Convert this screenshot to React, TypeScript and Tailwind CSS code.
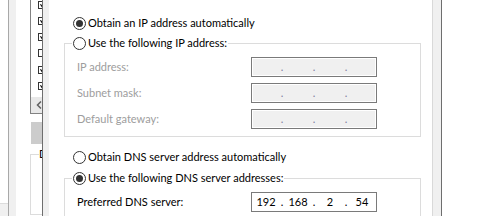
import { Fragment } from 'react';

function Radio({ checked }: { checked?: boolean }) {
  return (
    <span className="flex h-[13px] w-[13px] shrink-0 items-center justify-center rounded-full border border-[#333333] bg-white">
      {checked && <span className="h-[7px] w-[7px] rounded-full bg-[#333333]" />}
    </span>
  );
}

function RadioRow({ label, checked }: { label: string; checked?: boolean }) {
  return (
    <div className="flex h-[14px] items-center gap-[2px]">
      <Radio checked={checked} />
      <span className="whitespace-nowrap text-black">{label}</span>
    </div>
  );
}

function IpBox({ parts, disabled }: { parts: string[]; disabled?: boolean }) {
  return (
    <div
      className={
        disabled
          ? 'flex h-[20px] w-[126px] items-center border border-[#7a7a7a] bg-[#f0f0f0] shadow-[inset_0_0_0_1px_#ffffff]'
          : 'flex h-[20px] w-[126px] items-center border border-[#7a7a7a] bg-white'
      }
    >
      {parts.map((p, i) => (
        <Fragment key={i}>
          {i > 0 && (
            <span className={disabled ? 'flex w-[4px] justify-center text-[#7f7f9f]' : 'flex w-[4px] justify-center text-black'}>
              .
            </span>
          )}
          <span className="flex-1 text-center text-black">{p}</span>
        </Fragment>
      ))}
    </div>
  );
}

function FieldRow({ label, parts, disabled }: { label: string; parts: string[]; disabled?: boolean }) {
  return (
    <div className="flex h-[20px] items-center pl-[12px]">
      <span className={disabled ? 'w-[174px] text-[#9d9d9d]' : 'w-[174px] text-black'}>{label}</span>
      <IpBox parts={parts} disabled={disabled} />
    </div>
  );
}

function CheckRow({ checked }: { checked?: boolean }) {
  return (
    <div className="h-[17px] pl-[7px] pt-[1px]">
      <div className="relative h-[8px] w-[8px] border border-[#333333] bg-white">
        {checked && (
          <svg viewBox="0 0 8 8" className="absolute left-0 top-0 h-[6px] w-[6px]">
            <path d="M2 3 L4 6 L7 0" fill="none" stroke="#000" strokeWidth="1.6" />
          </svg>
        )}
      </div>
    </div>
  );
}

export default function App() {
  const blank = ['', '', '', ''];
  return (
    <div className="flex h-[216px] w-[478px] overflow-hidden bg-white font-['Segoe_UI','Lato',sans-serif] text-[11px] leading-[14px]">
      {/* window behind */}
      <div className="flex w-[8px] flex-col justify-end">
        <div className="h-[13px] border-t border-[#dcdcdc] bg-[#f0f0f0]" />
      </div>
      <div className="w-[1px] bg-[#a8a8a8]" />
      <div className="w-[7px] bg-[#f0f0f0]" />
      <div className="w-[14px] bg-white" />
      <div className="flex w-[12px] flex-col overflow-hidden">
        <div className="flex h-[114px] shrink-0 flex-col justify-end overflow-hidden border-b border-l border-[#828282]">
          <CheckRow checked />
          <CheckRow checked />
          <CheckRow checked />
          <CheckRow />
          <CheckRow checked />
          <CheckRow checked />
          <div className="flex h-[16px] shrink-0 items-center bg-[#e8e8e8] pl-[5px]">
            <svg viewBox="0 0 6 8" className="h-[8px] w-[6px]">
              <path d="M5 0.5 L1.5 4 L5 7.5" fill="none" stroke="#606060" strokeWidth="1.5" />
            </svg>
          </div>
        </div>
        <div className="ml-[1px] mt-[8px] h-[22px] shrink-0 bg-[#cccccc]" />
        <fieldset className="mt-[3px] h-[68px] w-[200px] shrink-0 border border-[#dcdcdc]">
          <legend className="ml-[8px] w-[6px] overflow-hidden whitespace-nowrap text-black">Description</legend>
        </fieldset>
      </div>
      <div className="w-[1px] bg-[#6e6e6e]" />
      <div className="w-[6px] bg-[#f0f0f0]" />

      {/* tab page */}
      <div className="flex w-[384px] shrink-0 flex-col border-r border-[#d9d9d9] bg-white pt-[16px]">
        <div className="pl-[24px]">
          <RadioRow label="Obtain an IP address automatically" checked />
        </div>
        <fieldset className="ml-[15px] mr-[11px] mt-[6px] border border-[#dcdcdc] pb-[7px]">
          <legend className="ml-[7px] px-[1px]">
            <RadioRow label="Use the following IP address:" />
          </legend>
          <div className="mt-[7px] flex flex-col gap-[6px]">
            <FieldRow label="IP address:" parts={blank} disabled />
            <FieldRow label="Subnet mask:" parts={blank} disabled />
            <FieldRow label="Default gateway:" parts={blank} disabled />
          </div>
        </fieldset>
        <div className="mt-[13px] pl-[24px]">
          <RadioRow label="Obtain DNS server address automatically" />
        </div>
        <fieldset className="ml-[15px] mr-[11px] mt-[7px] border border-[#dcdcdc] pb-[40px]">
          <legend className="ml-[7px] px-[1px]">
            <RadioRow label="Use the following DNS server addresses:" checked />
          </legend>
          <div className="mt-[7px] flex flex-col gap-[6px]">
            <FieldRow label="Preferred DNS server:" parts={['192', '168', '2', '54']} />
          </div>
        </fieldset>
      </div>
      <div className="w-[8px] bg-[#f0f0f0]" />
      <div className="w-[1px] bg-[#6e6e6e]" />
      <div className="flex-1 bg-white" />
    </div>
  );
}
